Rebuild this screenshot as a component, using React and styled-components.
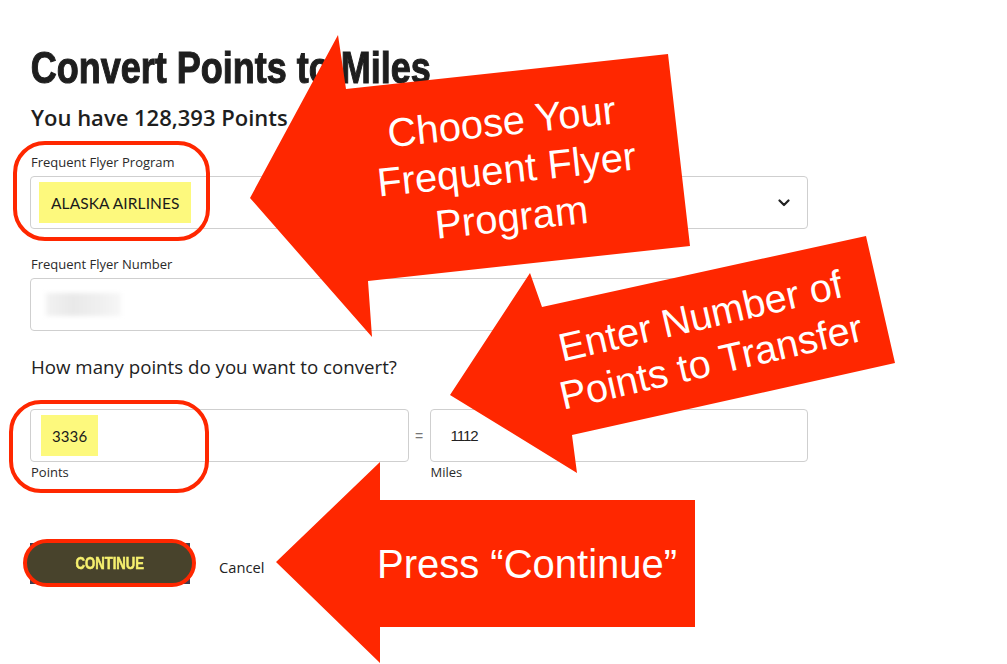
import React from "react";
import styled, { createGlobalStyle } from "styled-components";

const Global = createGlobalStyle`
  html, body { margin: 0; padding: 0; background: #fff; }
  body { font-family: "Open Sans", Lato, "Noto Sans", sans-serif; color: #222; }
`;

const Page = styled.div`
  position: relative;
  width: 1007px;
  height: 664px;
  overflow: hidden;
  box-sizing: border-box;
  padding: 45px 0 0 30px;
  background: #fff;
`;

const Form = styled.div`
  width: 778px;
  display: flex;
  flex-direction: column;
`;

const Title = styled.h1`
  margin: 0;
  font-family: "Liberation Sans", Arial, sans-serif;
  font-weight: 700;
  font-size: 45px;
  line-height: 45px;
  color: #1e1e1e;
  white-space: nowrap;
  -webkit-text-stroke: 1.1px #1e1e1e;
  transform: scaleX(0.8);
  transform-origin: left center;
  padding-left: 1px;
`;

const Balance = styled.div`
  margin-top: 15px;
  font-size: 22px;
  line-height: 24px;
  font-weight: 600;
  color: #1e1e1e;
  padding-left: 1px;
`;

const Field = styled.div`
  position: relative;
  display: flex;
  flex-direction: column;
  margin-top: ${(p) => p.$top || 0}px;
`;

const Label = styled.div`
  font-size: 13px;
  line-height: 16px;
  color: #2a2a2a;
  padding-left: 1px;
  margin-bottom: ${(p) => (p.$below ? 0 : 6)}px;
  margin-top: ${(p) => (p.$below ? 2 : 0)}px;
`;

const Box = styled.div`
  box-sizing: border-box;
  height: 53px;
  border: 1px solid #cfcfcf;
  border-radius: 4px;
  display: flex;
  align-items: center;
  justify-content: space-between;
  padding: 0 17px 0 ${(p) => p.$pad || 8}px;
  position: relative;
  background: #fff;
`;

const Highlight = styled.span`
  display: inline-flex;
  align-items: center;
  height: 41px;
  padding: 0 11px 0 ${(p) => p.$inset || 12}px;
  background: #fdf97d;
  font-family: Lato, "Open Sans", sans-serif;
  font-size: ${(p) => p.$size || 15.5}px;
  color: #1a1a1a;
  letter-spacing: 0.1px;
`;

const Blurred = styled.div`
  margin-left: 7px;
  width: 75px;
  height: 23px;
  background: linear-gradient(90deg, #f2f2f2, #e9e9e9 35%, #f0f0f0 75%, #f7f7f7);
  filter: blur(2px);
`;

const Question = styled.div`
  margin-top: 25px;
  font-size: 18.7px;
  line-height: 22px;
  color: #222;
  padding-left: 1px;
`;

const ConvertRow = styled.div`
  margin-top: 31px;
  display: grid;
  grid-template-columns: 1fr 21px 1fr;
  align-items: start;
`;

const Equals = styled.div`
  height: 53px;
  display: flex;
  align-items: center;
  justify-content: center;
  font-size: 14px;
  color: #777;
  font-family: "Liberation Sans", Arial, sans-serif;
`;

const PlainValue = styled.span`
  font-family: "Liberation Sans", Arial, sans-serif;
  font-size: 15px;
  letter-spacing: -1px;
  color: #222;
`;

const Actions = styled.div`
  margin-top: 63px;
  display: flex;
  align-items: center;
  gap: 29px;
`;

const Button = styled.button`
  position: relative;
  width: 160px;
  height: 41px;
  border: none;
  border-radius: 0;
  padding: 0;
  background: #403f50;
  display: flex;
  align-items: center;
  justify-content: center;
`;

const ButtonText = styled.span`
  position: relative;
  z-index: 1;
  font-family: "Liberation Sans", Arial, sans-serif;
  font-weight: 700;
  font-size: 16px;
  color: #f6f06f;
  -webkit-text-stroke: 0.5px #f6f06f;
  transform: scaleX(0.82);
  margin-top: 1px;
`;

const Cancel = styled.span`
  font-size: 14.7px;
  color: #222;
  margin-top: 6px;
`;

const Ring = styled.div`
  position: absolute;
  box-sizing: border-box;
  left: ${(p) => p.$x}px;
  top: ${(p) => p.$y}px;
  width: ${(p) => p.$w}px;
  height: ${(p) => p.$h}px;
  border: 4px solid #ff2700;
  border-radius: ${(p) => p.$r}px;
  background: ${(p) => p.$fill || "transparent"};
  pointer-events: none;
`;

const Overlay = styled.svg`
  position: absolute;
  left: 0;
  top: 0;
  width: 1007px;
  height: 664px;
  pointer-events: none;
  font-family: "Liberation Sans", Arial, sans-serif;
`;

const Chevron = () => (
  <svg width="12" height="8" viewBox="0 0 12 8">
    <path d="M1.5 1.5 L6 6 L10.5 1.5" fill="none" stroke="#222" strokeWidth="2.2" strokeLinecap="round" strokeLinejoin="round" />
  </svg>
);

const RED = "#ff2700";

const Arrows = () => (
  <Overlay viewBox="0 0 1007 664">
    <polygon fill={RED} points="250,198 338,35 346,89 668,54 690,246 368,281 372,337" />
    <g transform="rotate(-6 508 183)" fill="#fff" fontSize="40" textAnchor="middle">
      <text x="508" y="135">Choose Your</text>
      <text x="508" y="183">Frequent Flyer</text>
      <text x="508" y="231">Program</text>
    </g>
    <polygon fill={RED} points="450,395 530,273 542,307 866,236 895,363 572,435 577,473" />
    <g transform="rotate(-13 714 375)" fill="#fff" fontSize="39.5" textAnchor="middle">
      <text x="714" y="328">Enter Number of</text>
      <text x="714" y="375">Points to Transfer</text>
    </g>
    <polygon fill={RED} points="276,562 380,462 380,500 695,500 695,627 380,627 380,663" />
    <text x="377" y="578" fill="#fff" fontSize="40">Press “Continue”</text>
  </Overlay>
);

export default function App() {
  return (
    <>
      <Global />
      <Page>
        <Form>
          <Title>Convert Points to Miles</Title>
          <Balance>You have 128,393 Points</Balance>

          <Field $top={25}>
            <Label>Frequent Flyer Program</Label>
            <Box>
              <Highlight>ALASKA AIRLINES</Highlight>
              <Chevron />
            </Box>
            <Ring $x={-17} $y={-13} $w={197} $h={100} $r={32} />
          </Field>

          <Field $top={27}>
            <Label>Frequent Flyer Number</Label>
            <Box>
              <Blurred />
            </Box>
          </Field>

          <Question>How many points do you want to convert?</Question>

          <ConvertRow>
            <Field>
              <Box $pad={10}>
                <Highlight $size={15} $inset={11}>3336</Highlight>
              </Box>
              <Label $below>Points</Label>
              <Ring $x={-21} $y={-9} $w={200} $h={93} $r={32} />
            </Field>
            <Equals>=</Equals>
            <Field>
              <Box $pad={20}>
                <PlainValue>1112</PlainValue>
              </Box>
              <Label $below>Miles</Label>
            </Field>
          </ConvertRow>

          <Actions>
            <Button>
              <Ring $x={-7} $y={-4} $w={173} $h={48} $r={24} $fill="#48432c" />
              <ButtonText>CONTINUE</ButtonText>
            </Button>
            <Cancel>Cancel</Cancel>
          </Actions>
        </Form>
        <Arrows />
      </Page>
    </>
  );
}
